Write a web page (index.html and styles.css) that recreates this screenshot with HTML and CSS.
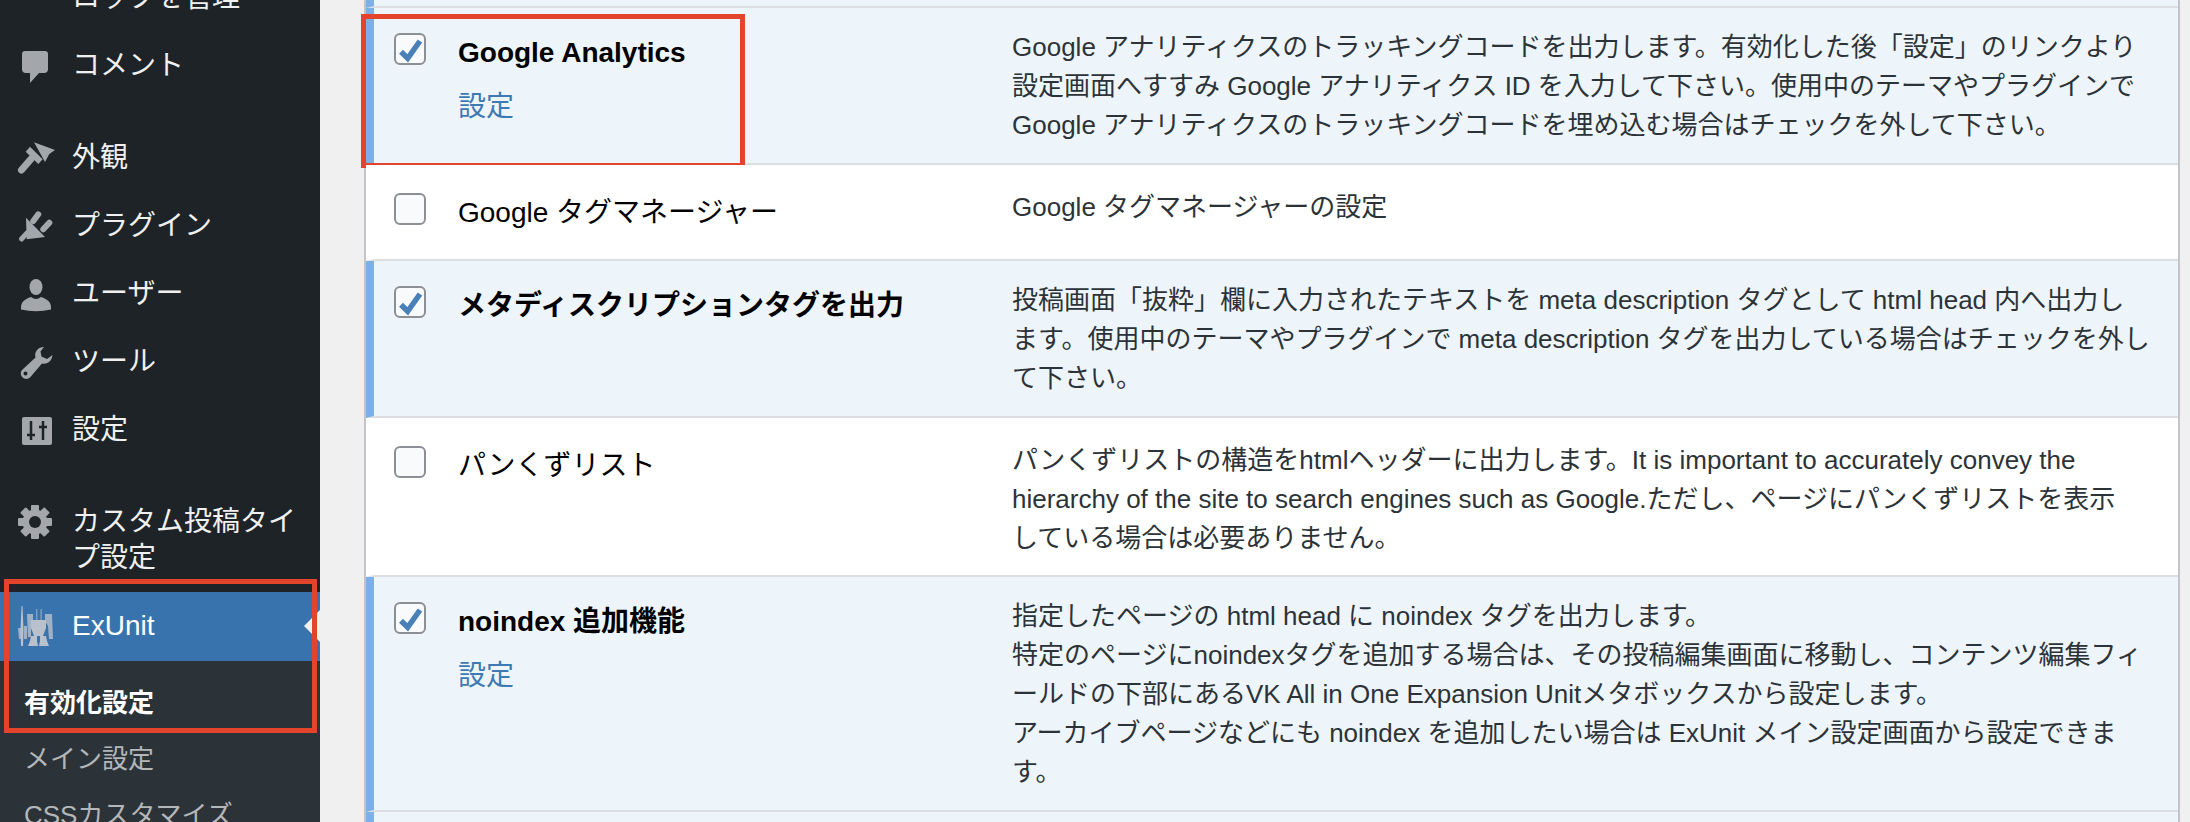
FILE: index.html
```html
<!DOCTYPE html>
<html>
<head>
    <title>ExUnit 有効化設定</title>
    <link rel="stylesheet" href="styles.css">
</head>
<body>
<div class="page">
    <div class="sidebar">
        <div class="menu">
            <div class="item"><span class="ico"></span><span class="name">再利用ブ<br>ロックを管理</span></div>
            <div class="item">
                <svg class="ico" viewBox="0 0 40 40"><path d="M9 5h20a3 3 0 0 1 3 3v15a4 4 0 0 1-4 4h-5l-9 10V27h-4a4 4 0 0 1-4-4V8a3 3 0 0 1 3-3z"/></svg>
                <span class="name">コメント</span>
            </div>
            <div class="gap"></div>
            <div class="item">
                <svg class="ico" viewBox="0 0 40 40"><path d="M18 4.300 39 12l-5.700 4L29 24z"/><path d="M9.700 13.700 14 8.700l12.700 12.600-4.400 4.700z"/><path d="M5.500 32 15 21" stroke="currentColor" stroke-width="7" stroke-linecap="round"/></svg>
                <span class="name">外観</span>
            </div>
            <div class="item">
                <svg class="ico" viewBox="0 0 40 40"><path d="M10 11.700 29 31l-18.300 2.300z"/><path d="M11 27l-5.500 6" stroke="currentColor" stroke-width="5" stroke-linecap="round"/><path d="M22.300 8.300l-5 6.700M33.300 16.700l-6 6.600" stroke="currentColor" stroke-width="6" stroke-linecap="round"/></svg>
                <span class="name">プラグイン</span>
            </div>
            <div class="item">
                <svg class="ico" viewBox="0 0 40 40"><ellipse cx="20" cy="13" rx="6.500" ry="8"/><path d="M5 33c0-6 6-8.500 10-10q5 4 10 0c4 1.500 10 4 10 10v2.500q-15 3.500-30 0z"/></svg>
                <span class="name">ユーザー</span>
            </div>
            <div class="item">
                <svg class="ico" viewBox="0 0 40 40"><path fill-rule="evenodd" d="M28 5c-6 0-10 5-8.500 10.500L6 28a5.500 5.500 0 0 0 8 7.500l12-14c5.500 1.500 10-3 10.500-8.500L31 17l-5.500-2.500-1-5zM9.500 29.500a2 2 0 1 1 0 4 2 2 0 0 1 0-4z"/></svg>
                <span class="name">ツール</span>
            </div>
            <div class="item">
                <svg class="ico" viewBox="0 0 40 40"><rect x="6" y="7" width="30" height="28" rx="2"/><path d="M15 11v19M11 25h8M27 11v19M23 17h8" stroke="#1d2327" stroke-width="2.500"/></svg>
                <span class="name">設定</span>
            </div>
            <div class="gap"></div>
            <div class="item">
                <svg class="ico" viewBox="0 0 40 40">
                    <g transform="translate(19 20)">
                        <rect x="-4" y="-17" width="8" height="34" rx="1"/>
                        <rect x="-4" y="-17" width="8" height="34" rx="1" transform="rotate(45)"/>
                        <rect x="-4" y="-17" width="8" height="34" rx="1" transform="rotate(90)"/>
                        <rect x="-4" y="-17" width="8" height="34" rx="1" transform="rotate(135)"/>
                        <circle r="12.500"/>
                        <circle r="6" fill="#1d2327"/>
                    </g>
                </svg>
                <span class="name">カスタム投稿タイ<br>プ設定</span>
            </div>
            <div class="item current">
                <svg class="ico robot" viewBox="0 0 40 40">
                    <path d="M5.500 0h1l1 24-.5 16H5l-.5-16z"/>
                    <path d="M2 22h3v11H3zM8 20h3v13H8z" opacity=".8"/>
                    <path d="M11 8h6v7l-2 3v13h-3z" opacity=".8"/>
                    <path d="M20.300 3h1v11h-1zM24.600 3h1v11h-1z" opacity=".8"/>
                    <path d="M15 14h15v8l-3 8H18l-3-8z"/>
                    <path d="M29 8h7l1 25h-4l-1-13-3-5z" opacity=".8"/>
                    <path d="M15 30h6v5l1 5h-10l2-5zM24 30h6l1 5 2 5H23l1-5z"/>
                </svg>
                <span class="name">ExUnit</span>
                <span class="arrow"></span>
                <span class="mark mark-menu"></span>
            </div>
        </div>
        <div class="submenu">
            <a class="sub-current">有効化設定</a>
            <a>メイン設定</a>
            <a>CSSカスタマイズ</a>
        </div>
    </div>
    <div class="main">
        <div class="table">
            <div class="row on stub"></div>
            <div class="row on first">
                <span class="check"><svg viewBox="2 2 28 28"><path d="M7 18.700l6.700 6.600L26 8"/></svg></span>
                <div>
                    <div class="title">Google Analytics</div>
                    <a class="link">設定</a>
                </div>
                <div class="desc">Google アナリティクスのトラッキングコードを出力します。有効化した後「設定」のリンクより<br>設定画面へすすみ Google アナリティクス ID を入力して下さい。使用中のテーマやプラグインで<br>Google アナリティクスのトラッキングコードを埋め込む場合はチェックを外して下さい。</div>
                <span class="mark mark-row"></span>
            </div>
            <div class="row off">
                <span class="check"></span>
                <div>
                    <div class="title">Google タグマネージャー</div>
                </div>
                <div class="desc">Google タグマネージャーの設定</div>
            </div>
            <div class="row on">
                <span class="check"><svg viewBox="2 2 28 28"><path d="M7 18.700l6.700 6.600L26 8"/></svg></span>
                <div>
                    <div class="title">メタディスクリプションタグを出力</div>
                </div>
                <div class="desc">投稿画面「抜粋」欄に入力されたテキストを meta description タグとして html head 内へ出力し<br>ます。使用中のテーマやプラグインで meta description タグを出力している場合はチェックを外し<br>て下さい。</div>
            </div>
            <div class="row off">
                <span class="check"></span>
                <div>
                    <div class="title">パンくずリスト</div>
                </div>
                <div class="desc">パンくずリストの構造をhtmlヘッダーに出力します。It is important to accurately convey the<br>hierarchy of the site to search engines such as Google.ただし、ページにパンくずリストを表示<br>している場合は必要ありません。</div>
            </div>
            <div class="row on">
                <span class="check"><svg viewBox="2 2 28 28"><path d="M7 18.700l6.700 6.600L26 8"/></svg></span>
                <div>
                    <div class="title">noindex 追加機能</div>
                    <a class="link">設定</a>
                </div>
                <div class="desc">指定したページの html head に noindex タグを出力します。<br>特定のページにnoindexタグを追加する場合は、その投稿編集画面に移動し、コンテンツ編集フィ<br>ールドの下部にあるVK All in One Expansion Unitメタボックスから設定します。<br>アーカイブページなどにも noindex を追加したい場合は ExUnit メイン設定画面から設定できま<br>す。</div>
            </div>
            <div class="row on"></div>
        </div>
    </div>
</div>
</body>
</html>
```

FILE: styles.css
```css
html, body { margin: 0; height: 822px; overflow: hidden; }
body { font-family: "Liberation Sans", "Noto Sans CJK JP", sans-serif; background: #f0f0f1; color: #2c3338; }
.page { display: flex; height: 822px; }

/* left menu */
.sidebar { width: 320px; flex-shrink: 0; background: #1d2327; overflow: hidden; display: flex; flex-direction: column; }
.menu { margin-top: -72px; }
.item { position: relative; display: flex; align-items: flex-start; padding: 16px 8px 16px 16px; font-size: 28px; line-height: 36px; color: #f0f0f1; }
.gap { height: 24px; }
.ico { flex-shrink: 0; width: 40px; height: 40px; margin: -2px 16px -2px 0; fill: #a3a7ab; color: #a3a7ab; }
.current { background: #3873ae; padding-bottom: 17px; color: #fff; }
.robot { fill: #b9c1cd; }
.arrow { position: absolute; right: 0; top: 18px; border: 16px solid transparent; border-left: 0; border-right-color: #f0f0f1; }
.submenu { flex: 1; background: #2c3338; padding-top: 14px; }
.submenu a { display: block; padding: 11px 24px; font-size: 26px; line-height: 34px; color: #b4b7ba; white-space: nowrap; }
.submenu .sub-current { color: #fff; font-weight: bold; }

/* red annotation frames */
.mark { position: absolute; box-sizing: border-box; border: 5px solid #e2442c; pointer-events: none; }
.mark-menu { left: 4px; top: -13px; width: 313px; height: 154px; }
.mark-row { left: -13px; top: 6px; width: 384px; height: 154px; }

/* plugin table */
.main { flex: 1; padding: 0 10px 0 44px; overflow: hidden; }
.table { border-left: 2px solid #c3c4c7; border-right: 2px solid #c3c4c7; }
.row { position: relative; display: grid; grid-template-columns: 64px 554px 1fr; padding-left: 20px; padding-right: 18px; border-bottom: 2px solid #dcdee1; }
.row.on { border-left: 8px solid #7cb0e6; background: #eef5fa; padding-top: 20px; padding-bottom: 18px; }
.row.off { border-left: 8px solid #fff; background: #fff; padding-top: 23px; padding-bottom: 17px; }
.row.stub { height: 6px; padding: 0; box-sizing: content-box; }
.check { box-sizing: border-box; display: block; width: 32px; height: 32px; margin-top: 5px; border: 2px solid #8c8f94; border-radius: 6px; background: #f9fafb; }
.check svg { display: block; width: 28px; height: 28px; fill: none; stroke: #4a80b8; stroke-width: 5.500; }
.title { margin: 5px 0 10px; font-size: 28px; line-height: 39px; color: #000; }
.on .title { font-weight: bold; }
.link { display: block; margin-top: 15px; font-size: 28px; line-height: 39px; color: #3d79b3; }
.desc { font-size: 26px; line-height: 39px; color: #2c3338; white-space: nowrap; }
```
